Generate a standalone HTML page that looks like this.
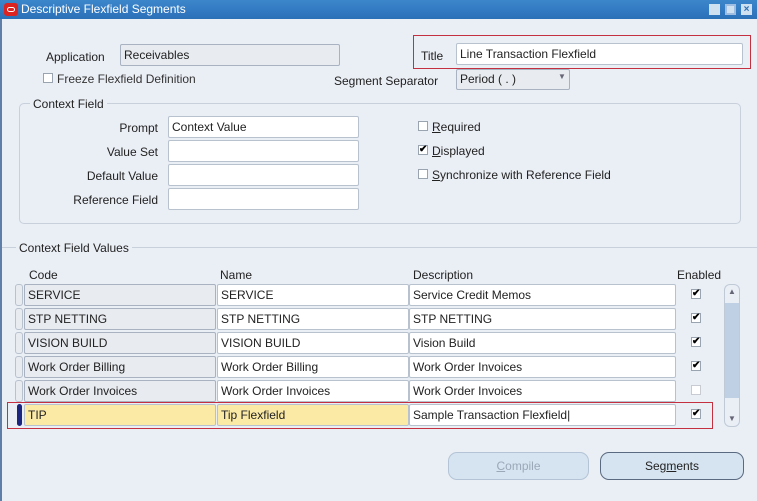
<!DOCTYPE html>
<html><head><meta charset="utf-8"><style>
*{box-sizing:border-box;margin:0;padding:0}
body{width:757px;height:501px;overflow:hidden;background:#eaeef5;font-family:"Liberation Sans",Arial,sans-serif;font-size:12px;color:#222;position:relative}
.a{position:absolute}
.tb{left:0;top:0;width:757px;height:19px;background:linear-gradient(#3c86cc,#2a70b8);color:#fff;font-size:12px}
.fld{position:absolute;height:22px;background:#fff;border:1px solid #b8c2cf;border-radius:2px;padding:3px 3px;white-space:nowrap;overflow:hidden}
.ro{background:#e8ebf0;border-color:#a8b2c0}
.lbl{position:absolute;white-space:nowrap}
.r{text-align:right}
.cb{position:absolute;width:10px;height:10px;border:1px solid #9aa4b0;background:#fff;font-size:10px;line-height:8px;text-align:center;color:#000;font-weight:bold}
.grp{position:absolute;border:1px solid #c8d0db;border-radius:5px}
.ind{position:absolute;left:15px;width:8px;height:22px;border:1px solid #b8c2cf;border-radius:3px;background:#e8ebf0}
.btn{position:absolute;height:28px;border-radius:9px;text-align:center;line-height:26px;font-size:12px}
</style></head><body>
<div class="a" style="left:0;top:19px;width:2px;height:482px;background:#5f7fa8"></div>
<div class="a tb"><div class="a" style="left:4px;top:3px;width:14px;height:13px;background:#d22;border-radius:3px"><div class="a" style="left:3px;top:4px;width:8px;height:5px;border:1.5px solid #fff;border-radius:3px"></div></div><span class="a" style="left:21px;top:2px">Descriptive Flexfield Segments</span>
<div class="a" style="left:709px;top:4px;width:11px;height:11px;background:#cfe0f0"></div><div class="a" style="left:725px;top:4px;width:11px;height:11px;background:#cfe0f0;border:2px solid #9fbde0"></div><div class="a" style="left:741px;top:4px;width:11px;height:11px;background:#cfe0f0;font-size:10px;line-height:11px;text-align:center;color:#2a70b8;font-weight:bold">×</div></div>

<div class="lbl" style="left:46px;top:50px">Application</div>
<div class="fld ro" style="left:120px;top:44px;width:220px">Receivables</div>
<div class="a" style="left:413px;top:35px;width:338px;height:34px;border:1px solid #c43040"></div>
<div class="lbl" style="left:421px;top:49px">Title</div>
<div class="fld" style="left:456px;top:43px;width:287px">Line Transaction Flexfield</div>
<div class="cb" style="left:43px;top:73px"></div><div class="lbl" style="left:57px;top:72px;color:#333">Freeze Flexfield Definition</div>
<div class="lbl" style="left:334px;top:74px">Segment Separator</div>
<div class="fld ro" style="left:456px;top:69px;width:114px;height:21px;padding-top:2px">Period ( . )<span class="a" style="left:101px;top:2px;font-size:8px;color:#667">▼</span></div>

<div class="grp" style="left:19px;top:103px;width:722px;height:121px"></div>
<div class="lbl" style="left:30px;top:97px;background:#eaeef5;padding:0 3px">Context Field</div>
<div class="lbl r" style="left:40px;width:118px;top:121px">Prompt</div>
<div class="lbl r" style="left:40px;width:118px;top:145px">Value Set</div>
<div class="lbl r" style="left:40px;width:118px;top:169px">Default Value</div>
<div class="lbl r" style="left:40px;width:118px;top:193px">Reference Field</div>
<div class="fld" style="left:168px;top:116px;width:191px">Context Value</div>
<div class="fld" style="left:168px;top:140px;width:191px"></div>
<div class="fld" style="left:168px;top:164px;width:191px"></div>
<div class="fld" style="left:168px;top:188px;width:191px"></div>
<div class="cb" style="left:418px;top:121px"></div><div class="lbl" style="left:432px;top:120px"><u>R</u>equired</div>
<div class="cb" style="left:418px;top:145px">✔</div><div class="lbl" style="left:432px;top:144px"><u>D</u>isplayed</div>
<div class="cb" style="left:418px;top:169px"></div><div class="lbl" style="left:432px;top:168px"><u>S</u>ynchronize with Reference Field</div>

<div class="a" style="left:2px;top:247px;width:755px;height:1px;background:#c8d0db"></div>
<div class="lbl" style="left:16px;top:241px;background:#eaeef5;padding:0 3px">Context Field Values</div>
<div class="lbl" style="left:29px;top:268px">Code</div>
<div class="lbl" style="left:220px;top:268px">Name</div>
<div class="lbl" style="left:413px;top:268px">Description</div>
<div class="lbl" style="left:677px;top:268px">Enabled</div>

<div class="ind" style="top:284px"></div><div class="fld ro" style="left:24px;top:284px;width:192px">SERVICE</div><div class="fld" style="left:217px;top:284px;width:192px">SERVICE</div><div class="fld" style="left:409px;top:284px;width:267px">Service Credit Memos</div><div class="cb" style="left:691px;top:289px">✔</div>
<div class="ind" style="top:308px"></div><div class="fld ro" style="left:24px;top:308px;width:192px">STP NETTING</div><div class="fld" style="left:217px;top:308px;width:192px">STP NETTING</div><div class="fld" style="left:409px;top:308px;width:267px">STP NETTING</div><div class="cb" style="left:691px;top:313px">✔</div>
<div class="ind" style="top:332px"></div><div class="fld ro" style="left:24px;top:332px;width:192px">VISION BUILD</div><div class="fld" style="left:217px;top:332px;width:192px">VISION BUILD</div><div class="fld" style="left:409px;top:332px;width:267px">Vision Build</div><div class="cb" style="left:691px;top:337px">✔</div>
<div class="ind" style="top:356px"></div><div class="fld ro" style="left:24px;top:356px;width:192px">Work Order Billing</div><div class="fld" style="left:217px;top:356px;width:192px">Work Order Billing</div><div class="fld" style="left:409px;top:356px;width:267px">Work Order Invoices</div><div class="cb" style="left:691px;top:361px">✔</div>
<div class="ind" style="top:380px"></div><div class="fld ro" style="left:24px;top:380px;width:192px">Work Order Invoices</div><div class="fld" style="left:217px;top:380px;width:192px">Work Order Invoices</div><div class="fld" style="left:409px;top:380px;width:267px">Work Order Invoices</div><div class="cb" style="left:691px;top:385px;border-color:#c8ccd2"></div>
<div class="ind" style="top:404px;left:17px;width:5px;background:#1a2580;border-color:#1a2580"></div><div class="fld" style="left:24px;top:404px;width:192px;background:#fbe9a6">TIP</div><div class="fld" style="left:217px;top:404px;width:192px;background:#fbe9a6">Tip Flexfield</div><div class="fld" style="left:409px;top:404px;width:267px">Sample Transaction Flexfield|</div><div class="cb" style="left:691px;top:409px">✔</div>
<div class="a" style="left:7px;top:402px;width:706px;height:27px;border:1px solid #c43040"></div>

<div class="a" style="left:724px;top:284px;width:16px;height:143px;border:1px solid #c0cad6;border-radius:6px;background:#bfd0e4"></div>
<div class="a" style="left:725px;top:285px;width:14px;height:18px;background:#eaeef5;border-radius:5px 5px 0 0;font-size:8px;text-align:center;color:#667;line-height:14px">▲</div>
<div class="a" style="left:725px;top:398px;width:14px;height:14px;background:#eaeef5"></div>
<div class="a" style="left:725px;top:412px;width:14px;height:14px;background:#eaeef5;border-radius:0 0 5px 5px;font-size:8px;text-align:center;color:#667;line-height:14px">▼</div>

<div class="btn" style="left:448px;top:452px;width:141px;border:1px solid #b4c4d6;background:#d6e3f0;color:#9aa8b8"><u>C</u>ompile</div>
<div class="btn" style="left:600px;top:452px;width:144px;border:1px solid #5a6a80;background:#d6e3f0;color:#222">Seg<u>m</u>ents</div>
</body></html>
